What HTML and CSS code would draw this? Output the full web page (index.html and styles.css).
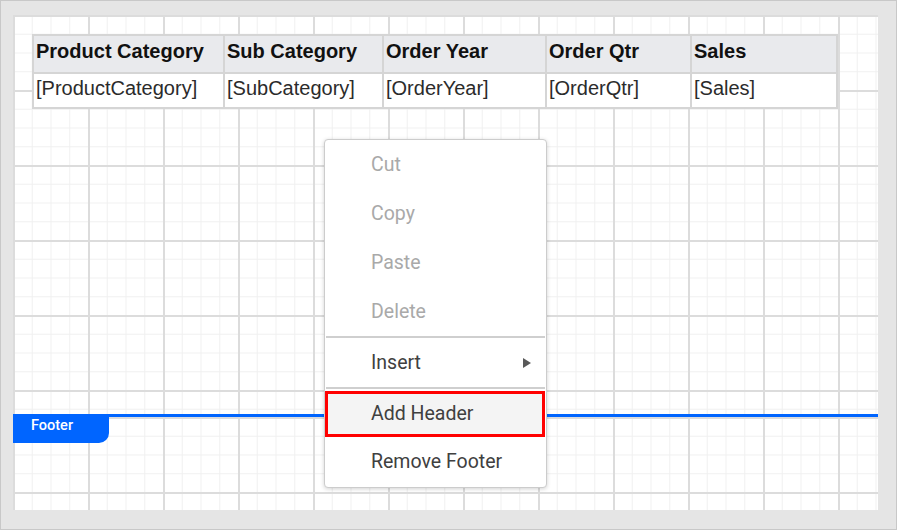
FILE: index.html
```html
<!DOCTYPE html>
<html lang="en">
<head>
    <meta charset="UTF-8">
    <meta name="viewport" content="width=device-width, initial-scale=1.0">
    <title>Report Designer</title>
    <link rel="stylesheet" href="styles.css">
</head>
<body>
    <div class="frame">
        <div class="canvas">
            <div class="report-body grid">
                <div class="table">
                    <div class="cell head">Product Category</div>
                    <div class="cell head">Sub Category</div>
                    <div class="cell head">Order Year</div>
                    <div class="cell head">Order Qtr</div>
                    <div class="cell head">Sales</div>
                    <div class="cell">[ProductCategory]</div>
                    <div class="cell">[SubCategory]</div>
                    <div class="cell">[OrderYear]</div>
                    <div class="cell">[OrderQtr]</div>
                    <div class="cell">[Sales]</div>
                </div>
            </div>
            <div class="report-footer grid">
                <span class="footer-tab">Footer</span>
            </div>
        </div>

        <ul class="menu">
            <li class="item disabled">Cut</li>
            <li class="item disabled">Copy</li>
            <li class="item disabled">Paste</li>
            <li class="item disabled">Delete</li>
            <li class="sep"></li>
            <li class="item has-sub">Insert <span class="arrow"></span></li>
            <li class="sep"></li>
            <li class="item selected">Add Header</li>
            <li class="item">Remove Footer</li>
        </ul>
    </div>
</body>
</html>
```

FILE: styles.css
```css
body {
    margin: 0;
    font-family: "Liberation Sans", Arial, sans-serif;
}
.frame {
    position: relative;
    width: 897px;
    height: 530px;
    box-sizing: border-box;
    border: 1px solid #c8c8c8;
    background: #e5e5e5;
    padding: 14px 0 0 12px;
}
.canvas {
    width: 865px;
    height: 495px;
    display: flex;
    flex-direction: column;
    background: #fff;
}
.grid {
    background-color: #fff;
    background-image:
        linear-gradient(to right, #dcdcdc 1.6px, transparent 1.6px),
        linear-gradient(to bottom, #dcdcdc 1.6px, transparent 1.6px),
        linear-gradient(to right, #f0f0f0 1px, transparent 1px),
        linear-gradient(to bottom, #f0f0f0 1px, transparent 1px);
    background-size: 75px 75px, 75px 75px, 18.75px 18.75px, 18.75px 18.75px;
}
.report-body {
    height: 399px;
    box-sizing: border-box;
    padding: 19px;
}
.report-footer {
    position: relative;
    flex: 1;
    border-top: 3px solid #0065ff;
}

/* table */
.table {
    display: grid;
    grid-template-columns: 189px 157px 161px 143px 144px;
    grid-template-rows: 36px 33px;
    gap: 2px;
    padding: 2px;
    width: max-content;
    background: #d5d5d5;
}
.cell {
    background: #fff;
    padding: 0 2px;
    font-size: 20px;
    line-height: 28px;
    color: #2b2b2b;
    white-space: nowrap;
    overflow: hidden;
}
.cell.head {
    background: #e9eaed;
    font-weight: bold;
    line-height: 31px;
    color: #111;
}

/* footer label */
.footer-tab {
    position: absolute;
    left: 0;
    top: -3px;
    width: 96px;
    height: 29px;
    box-sizing: border-box;
    padding-left: 18px;
    background: #0065ff;
    border-radius: 0 0 10px 0;
    color: #fff;
    font-family: Roboto, sans-serif;
    font-weight: 500;
    font-size: 14.5px;
    line-height: 24px;
}

/* context menu */
.menu {
    position: absolute;
    left: 323px;
    top: 138px;
    width: 223px;
    box-sizing: border-box;
    margin: 0;
    padding: 0 0 1px;
    list-style: none;
    background: #fff;
    border: 1px solid #cccccc;
    border-radius: 4px;
    box-shadow: 0 1px 4px rgba(0, 0, 0, 0.18);
    font-family: Roboto, sans-serif;
    font-size: 19.5px;
}
.item {
    display: flex;
    align-items: center;
    justify-content: space-between;
    height: 49px;
    padding: 0 15px 0 46px;
    line-height: 49px;
    color: #404040;
}
.item.disabled {
    color: #a9a9a9;
}
.sep {
    height: 2px;
    margin: 0 1px;
    background: #cfcfcf;
}
.item.selected {
    height: 46px;
    box-sizing: border-box;
    margin: 2px 1px 0 0;
    padding-left: 43px;
    line-height: 40px;
    border: 3px solid #ff0000;
    background: #f4f4f4;
}
.arrow {
    width: 0;
    height: 0;
    border-left: 8px solid #595959;
    border-top: 5.5px solid transparent;
    border-bottom: 5.5px solid transparent;
}
```
